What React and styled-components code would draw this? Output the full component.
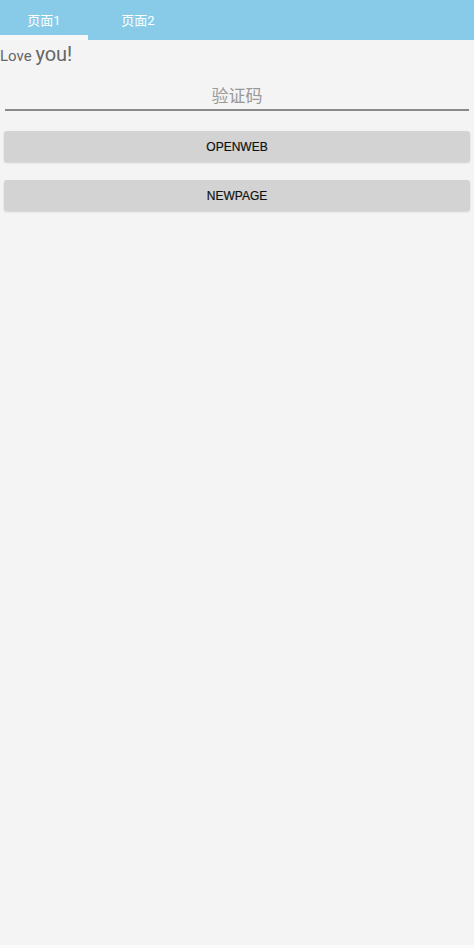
import React from 'react';
import styled, { createGlobalStyle } from 'styled-components';

const GlobalStyle = createGlobalStyle`
  html, body {
    margin: 0;
    padding: 0;
    background: #fafafa;
  }
  body {
    font-family: Roboto, "Noto Sans CJK SC", sans-serif;
  }
`;

const Page = styled.div`
  width: 474px;
  height: 948px;
  display: flex;
  flex-direction: column;
  box-sizing: border-box;
  padding: 0 0 3px 0;
  background: #fafafa;
`;

const Screen = styled.div`
  flex: 1;
  display: flex;
  flex-direction: column;
  background: #f4f4f4;
`;

const TabBar = styled.div`
  height: 40px;
  display: flex;
  background: #87cbe8;
`;

const Tab = styled.div`
  width: ${p => p.width}px;
  display: flex;
  flex-direction: column;
  justify-content: space-between;
  align-items: center;
  color: #fff;
  font-size: 13px;
  font-family: Roboto, "Noto Sans CJK SC", sans-serif;
`;

const TabLabel = styled.span`
  margin-top: 10px;
`;

const Indicator = styled.div`
  width: 100%;
  height: 5px;
  background: ${p => (p.active ? '#f7f7f7' : 'transparent')};
`;

const Content = styled.div`
  display: flex;
  flex-direction: column;
  padding: 0 4px 0 4px;
`;

const Greeting = styled.div`
  margin: 2px 0 0 -4px;
  color: #666;
  font-family: Roboto, sans-serif;
  font-size: 15px;
  line-height: 24px;
`;

const Big = styled.span`
  font-size: 20px;
`;

const CodeInput = styled.input`
  margin: 9px 1px 0 1px;
  height: 30px;
  border: none;
  border-bottom: 2px solid #8a8a8a;
  background: transparent;
  text-align: center;
  font-size: 17px;
  font-family: "Noto Sans CJK SC", sans-serif;
  color: #333;
  outline: none;
  padding: 2px 0 0 0;

  &::placeholder {
    color: #999;
  }
`;

const Button = styled.button`
  height: 31px;
  margin-top: ${p => p.gap}px;
  border: none;
  border-radius: 3px;
  background: #d3d3d3;
  box-shadow: 0 1px 2px rgba(0, 0, 0, 0.15);
  color: #111;
  font-family: "Liberation Sans", Arial, sans-serif;
  font-size: 12px;
  font-weight: normal;
  -webkit-text-stroke: 0.2px #111;
  cursor: pointer;
`;

export default function App() {
  return (
    <>
      <GlobalStyle />
      <Page>
        <Screen>
          <TabBar>
            <Tab width={88}>
              <TabLabel>页面1</TabLabel>
              <Indicator active />
            </Tab>
            <Tab width={100}>
              <TabLabel>页面2</TabLabel>
              <Indicator />
            </Tab>
          </TabBar>
          <Content>
            <Greeting>
              Love <Big>you!</Big>
            </Greeting>
            <CodeInput placeholder="验证码" />
            <Button gap={20}>OPENWEB</Button>
            <Button gap={18}>NEWPAGE</Button>
          </Content>
        </Screen>
      </Page>
    </>
  );
}
